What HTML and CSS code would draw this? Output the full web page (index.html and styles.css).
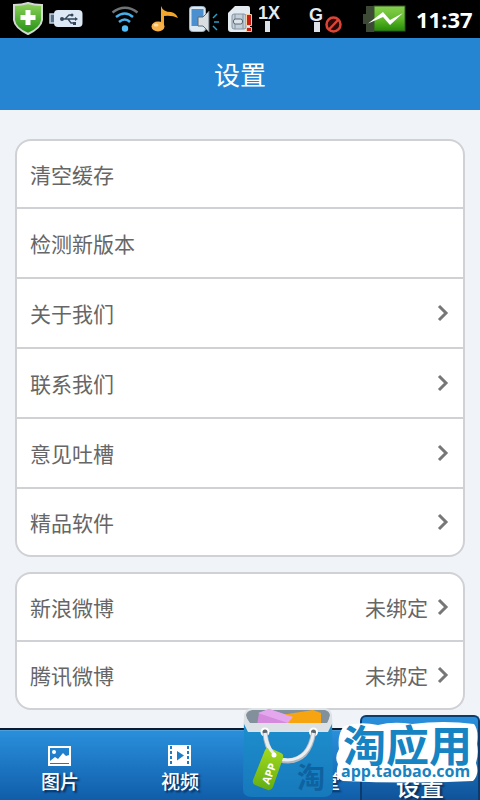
FILE: index.html
```html
<!DOCTYPE html>
<html lang="zh-CN">

<head>
    <meta charset="UTF-8">
    <meta name="viewport" content="width=device-width, initial-scale=1">
    <title>设置</title>
    <link rel="stylesheet" href="styles.css">
</head>

<body>
    <div class="status-bar">
        <svg width="30" height="38" viewBox="13 0 30 38">
            <defs>
                <linearGradient id="shield" x1="0" y1="0" x2="0" y2="1">
                    <stop offset="0" stop-color="#8ed35c"/>
                    <stop offset="1" stop-color="#208e10"/>
                </linearGradient>
            </defs>
            <path d="M14 5Q22 5 28 3Q34 5 42 5V20Q41 28 28 34Q15 28 14 20Z" fill="url(#shield)" stroke="#d3d8d5" stroke-width="2"/>
            <path d="M25.500 10h5v5h5v5h-5v5h-5v-5h-5v-5h5z" fill="#fff"/>
        </svg>
        <svg width="34" height="38" viewBox="49 0 34 38">
            <path d="M55 14h-5v9h5" fill="#5a6f85" stroke="#c3d6e6" stroke-width="1.500"/>
            <rect x="54" y="10" width="28.500" height="17" rx="4" fill="#dce9f4"/>
            <path d="M61 19h15M65 19l4-4h3M68 19l3 4h3" fill="none" stroke="#35465b" stroke-width="1.300"/>
            <circle cx="62" cy="19" r="2" fill="#35465b"/>
            <circle cx="72" cy="15" r="1.500" fill="#35465b"/>
            <rect x="73" y="22" width="3" height="3" fill="#35465b"/>
            <path d="M75 17l3 2-3 2z" fill="#35465b"/>
        </svg>
        <svg width="56" height="38" viewBox="89 0 56 38">
            <g fill="none" stroke="#46aee8" stroke-width="2.500">
                <path d="M112.500 12.500Q125 3 137.500 12.500" stroke="#6f7477"/>
                <path d="M116 17Q125 10 133 17"/>
                <path d="M119 22Q125 17 130 22"/>
            </g>
            <circle cx="125" cy="28.500" r="3.200" fill="#55bdf5"/>
        </svg>
        <svg width="30" height="38" viewBox="151 0 30 38">
            <path d="M161 27V6Q163 12 171 12Q176 13 178 18Q172 15 164 16V27" fill="#f3a42a"/>
            <ellipse cx="158" cy="26.500" rx="6.500" ry="5" fill="#f7b149"/>
            <ellipse cx="156" cy="25" rx="2.500" ry="1.500" fill="#fddba4"/>
        </svg>
        <svg width="34" height="38" viewBox="187 0 34 38">
            <rect x="189.500" y="6.500" width="16" height="25" rx="3" fill="#dce8f2" stroke="#9fb4c6"/>
            <rect x="191.500" y="9" width="12" height="17" fill="#4a8fd0"/>
            <path d="M198 17h5l6-6v21l-6-6h-5z" fill="#d9dee3" stroke="#5d6973"/>
            <path d="M213 18l4-4M214 22h5M213 26l4 4" stroke="#2b9fc4" stroke-width="1.500"/>
        </svg>
        <svg width="26" height="38" viewBox="227 0 26 38">
            <path d="M235 6h13q2 0 2 2v21q0 3-3 3h-16q-3 0-3-3V13z" fill="#e3ebf1"/>
            <rect x="232" y="14" width="14" height="15" rx="2" fill="#c4cfd8" stroke="#8595a2"/>
            <path d="M235 14v15M243 14v15" stroke="#8595a2"/>
            <rect x="233.500" y="19" width="9" height="5" rx="2" fill="#dde5eb" stroke="#566674"/>
            <path d="M246.500 14.500h5v11h-5zM246.500 27.500h5v4h-5z" fill="#cb1d12" stroke="#f6cfa5"/>
        </svg>
        <svg width="44" height="38" viewBox="259 0 44 38">
            <text x="258" y="19" class="signal-text">1X</text>
            <path d="M265 21h5v11h-5z" fill="#dce2e7"/>
        </svg>
        <svg width="47" height="38" viewBox="309 0 47 38">
            <text x="309" y="21" class="signal-text">G</text>
            <path d="M314 22h6v10h-6z" fill="#dce2e7"/>
            <circle cx="333.500" cy="24.500" r="7" fill="#2b0907" stroke="#dc4535" stroke-width="2.500"/>
            <path d="M329 29.500l9.500-10" stroke="#dc4535" stroke-width="2.500"/>
        </svg>
        <svg width="48" height="38" viewBox="362 0 48 38">
            <defs>
                <linearGradient id="battery" x1="0" y1="0" x2="0" y2="1">
                    <stop offset="0" stop-color="#88d04e"/>
                    <stop offset=".5" stop-color="#62bb2b"/>
                    <stop offset="1" stop-color="#238b05"/>
                </linearGradient>
            </defs>
            <path d="M363 14h3V6h8v26h-8v-8h-3z" fill="#3c4a35"/>
            <rect x="374" y="6" width="31" height="25" fill="url(#battery)" stroke="#35572a"/>
            <path d="M368 23.500l15-11.500 7 8 13-7-13 12-7-8z" fill="#fff"/>
        </svg>
        <time class="clock">11:37</time>
    </div>

    <header class="title-bar">
        <h1>设置</h1>
    </header>

    <main class="settings">
        <section class="card">
            <button type="button" class="row">清空缓存</button>
            <button type="button" class="row">检测新版本</button>
            <a href="#about" class="row">关于我们
                <svg class="arrow" viewBox="0 0 12 18"><path d="M2 2l7 7-7 7"/></svg>
            </a>
            <a href="#contact" class="row">联系我们
                <svg class="arrow" viewBox="0 0 12 18"><path d="M2 2l7 7-7 7"/></svg>
            </a>
            <a href="#feedback" class="row">意见吐槽
                <svg class="arrow" viewBox="0 0 12 18"><path d="M2 2l7 7-7 7"/></svg>
            </a>
            <a href="#apps" class="row">精品软件
                <svg class="arrow" viewBox="0 0 12 18"><path d="M2 2l7 7-7 7"/></svg>
            </a>
        </section>

        <section class="card">
            <a href="#sina" class="row">新浪微博
                <span class="state">未绑定</span>
                <svg class="arrow" viewBox="0 0 12 18"><path d="M2 2l7 7-7 7"/></svg>
            </a>
            <a href="#tencent" class="row">腾讯微博
                <span class="state">未绑定</span>
                <svg class="arrow" viewBox="0 0 12 18"><path d="M2 2l7 7-7 7"/></svg>
            </a>
        </section>
    </main>

    <nav class="tabs">
        <a href="#pictures" class="tab">
            <svg width="24" height="22" viewBox="0 0 24 22">
                <path d="M0 1h23v20H0zM2 3v16h19V3z" fill="#fff" fill-rule="evenodd"/>
                <circle cx="6" cy="7" r="2" fill="#fff"/>
                <path d="M2 16l5-4 3 2 5-6 3 3 3-1v8H2z" fill="#fff"/>
            </svg>
            <span>图片</span>
        </a>
        <a href="#videos" class="tab">
            <svg width="24" height="22" viewBox="0 0 24 22">
                <path d="M0 0h23v21H0z" fill="#fff"/>
                <path d="M2 1h2v3H2zM2 6h2v3H2zM2 11h2v3H2zM2 16h2v3H2zM19 1h2v3h-2zM19 6h2v3h-2zM19 11h2v3h-2zM19 16h2v3h-2zM9 6l7 4.500-7 5z" fill="#1c7cc8"/>
            </svg>
            <span>视频</span>
        </a>
        <a href="#class" class="tab wide">
            <span>课堂</span>
        </a>
        <a href="#settings" class="tab active">
            <span>设置</span>
        </a>
    </nav>

    <a href="#taobao" class="promo" aria-label="淘应用 app.taobao.com">
        <svg width="240" height="96" viewBox="240 704 240 96">
            <defs>
                <linearGradient id="bag" x1="0" y1="0" x2="0" y2="1">
                    <stop offset="0" stop-color="#1e90cf"/>
                    <stop offset="1" stop-color="#1679bb"/>
                </linearGradient>
                <linearGradient id="tag" x1="0" y1="0" x2="0" y2="1">
                    <stop offset="0" stop-color="#a4da1e"/>
                    <stop offset="1" stop-color="#62ad12"/>
                </linearGradient>
            </defs>
            <path d="M252 709h73q5 1 6 6l-3 11h-80l-3-11q1-5 7-6z" fill="#81909a" stroke="#dfe4e7" stroke-width="2"/>
            <path d="M257 725l2-12 10-4 24 8v9z" fill="#d48bdd"/>
            <path d="M281 715l32-5 8 3v13h-30z" fill="#f6a40f"/>
            <path d="M269 709l24 8-5 6-30-10z" fill="#e4a7ed"/>
            <path d="M244 718l5 9h79l4-9 1 71q-1 8-10 8h-71q-9 0-9-8z" fill="url(#bag)"/>
            <path d="M244 714l6 9h77l5-9v10l-4 8h-80l-4-8z" fill="#dce1e5"/>
            <text x="297" y="788" class="bag-text">淘</text>
            <g fill="#5b666e" stroke="#fff" stroke-width="2">
                <circle cx="265" cy="732" r="3.500"/>
                <circle cx="313.500" cy="732" r="3.500"/>
            </g>
            <path d="M265 733q3 28 23 28 21-1 25.500-28" fill="none" stroke="#aeb8c0" stroke-width="5"/>
            <path d="M265 733q3 27 23 27 21-1 25.500-27" fill="none" stroke="#eceff1" stroke-width="3"/>
            <path d="M265 750q2-3 5-2l11 5q3 1 2 5l-10 29q-2 4-5 3l-13-5q-3-2-2-5z" fill="url(#tag)"/>
            <path d="M265 734q2 13 9 20" fill="none" stroke="#e9edef" stroke-width="3"/>
            <circle cx="274" cy="755" r="2.500" fill="#fff"/>
            <text class="tag-text" transform="translate(269 785) rotate(-69)">APP</text>
            <path d="M344 726q16-5 34-1 15-4 34-1 32-4 62 0 5 6 3 20 2 10-1 19 4 11-3 18-64 3-130 0-9-3-5-17-4-6 1-15-2-15 5-23z" fill="#fff"/>
            <text x="343" y="762" class="promo-name">淘应用</text>
            <text x="341" y="777" class="promo-url">app.taobao.com</text>
        </svg>
    </a>
</body>

</html>
```

FILE: styles.css
```css
* {
    box-sizing: border-box;
}

body {
    position: relative;
    display: flex;
    flex-direction: column;
    min-height: 100vh;
    margin: 0;
    background-color: #f0f3f8;
    color: #666;
    font-family: "Noto Sans CJK SC", sans-serif;
    font-size: 21px;
}

a {
    color: inherit;
    text-decoration: none;
}

.status-bar {
    display: flex;
    gap: 6px;
    height: 38px;
    padding: 0 9px 0 13px;
    background-color: #000;
}

.status-bar svg {
    flex: none;
}

.signal-text {
    fill: #e4eaf0;
    font: bold 18px "Liberation Sans", sans-serif;
}

.clock {
    margin-left: auto;
    color: #fff;
    font: bold 22px/38px "Open Sans", sans-serif;
}

.title-bar {
    display: flex;
    align-items: center;
    justify-content: center;
    height: 72px;
    padding-bottom: 2px;
    background-color: #2585d3;
    color: #fff;
}

.title-bar h1 {
    margin: 0;
    font-size: 26px;
    font-weight: 400;
}

.settings {
    display: flex;
    flex: 1;
    flex-direction: column;
    gap: 15px;
    padding: 29px 15px 18px;
}

.card {
    border: 2px solid #d0d1d4;
    border-radius: 16px;
    background-color: #fff;
}

.row {
    display: flex;
    align-items: center;
    width: 100%;
    height: 70px;
    padding: 0 14px 1px 13px;
    border: 0;
    border-bottom: 2px solid #d0d1d4;
    background: none;
    color: inherit;
    font: inherit;
    text-align: left;
}

.row:first-child {
    height: 68px;
}

.row:last-child {
    height: 66px;
    padding-bottom: 0;
    border-bottom: 0;
}

.state {
    margin-left: auto;
}

.arrow {
    width: 12px;
    height: 18px;
    margin-left: auto;
    fill: none;
    stroke: #777;
    stroke-width: 3;
}

.state + .arrow {
    margin-left: 9px;
}

.tabs {
    display: grid;
    grid-template-columns: repeat(4, 1fr);
    height: 72px;
    border-top: 2px solid #0b1c30;
    background: linear-gradient(#2a90dc, #105da9);
    box-shadow: inset 0 1px #4b9fdc;
}

.tab {
    display: flex;
    flex-direction: column;
    align-items: center;
    justify-content: flex-end;
    padding-bottom: 5px;
    color: #fff;
    font-size: 19px;
    font-weight: 500;
    line-height: 28px;
    text-shadow: 2px 2px 2px #06294f;
}

.tab.wide {
    align-items: flex-end;
    padding-right: 20px;
}

.tab.active {
    margin-top: -15px;
    padding-bottom: 0;
    border: 2px solid #0b3c70;
    border-bottom: 0;
    border-radius: 6px 6px 0 0;
    background: linear-gradient(#2a90dc, #0f539a);
    font-size: 24px;
}

/* badge over the right end of the tab bar */
.promo {
    position: absolute;
    right: 0;
    bottom: 0;
    height: 96px;
}

.promo svg {
    display: block;
}

.bag-text {
    fill: #0f62a0;
    font: bold 28px "Noto Sans CJK SC", sans-serif;
}

.tag-text {
    fill: #fff;
    font: bold 11px "Open Sans", sans-serif;
}

.promo-name,
.promo-url {
    fill: #1683c3;
}

.promo-name {
    font: bold 43px "Noto Sans CJK SC", sans-serif;
}

.promo-url {
    font: bold 16px "Open Sans", sans-serif;
}
```
